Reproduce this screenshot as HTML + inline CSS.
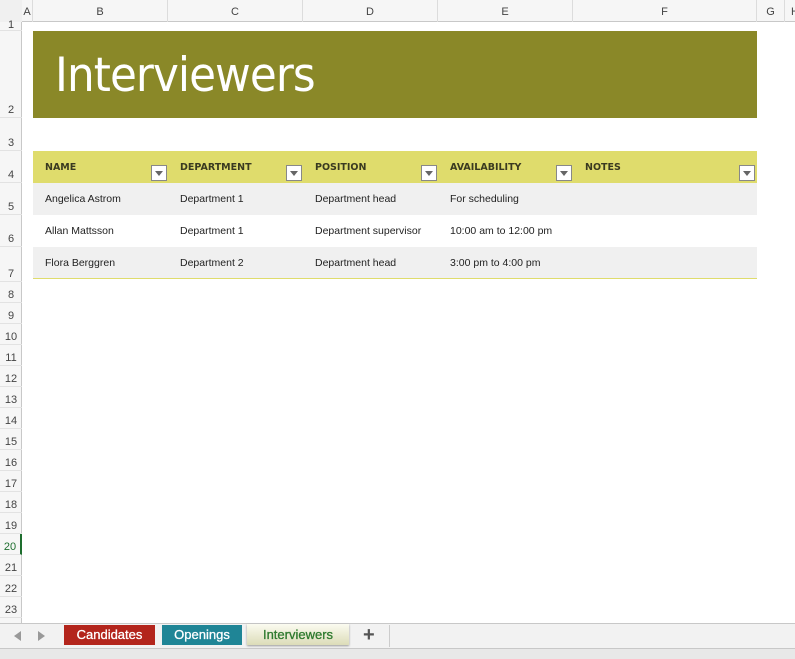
<!DOCTYPE html>
<html><head><style>
*{margin:0;padding:0;box-sizing:border-box}
body{width:795px;height:659px;overflow:hidden;background:#fff;position:relative;font-family:"DejaVu Sans","Liberation Sans",sans-serif;}
.a{position:absolute}
.ch{position:absolute;top:0;height:22px;border-right:1px solid #dcdcdc;font-size:11px;color:#444;text-align:center;line-height:24px;font-family:"Liberation Sans",sans-serif}
.rh{position:absolute;left:0;width:22px;border-bottom:1px solid #e2e2e2;font-size:11px;color:#444;text-align:center;font-family:"Liberation Sans",sans-serif;display:flex;align-items:flex-end;justify-content:center;padding-bottom:1px}
.hd{position:absolute;top:151px;height:32px;font-size:9.5px;font-weight:bold;color:#3a3a20;padding:11px 0 0 12px}
.dd{position:absolute;top:165px;width:16px;height:16px;border:1px solid #888;background:#fff}
.dd:after{content:"";position:absolute;left:3px;top:5px;border-left:4px solid transparent;border-right:4px solid transparent;border-top:5px solid #666}
.c{position:absolute;font-size:10.5px;color:#222;font-family:"Liberation Sans",sans-serif}
.tab{position:absolute;top:625px;height:20px;font-family:"Liberation Sans",sans-serif;font-size:13px;text-align:center;line-height:20px;-webkit-text-stroke:0.3px}
</style></head><body>
<div class="a" style="left:0;top:0;width:795px;height:22px;background:#f6f6f6;border-bottom:1px solid #c8c8c8"></div>
<div class="a" style="left:0;top:0;width:22px;height:22px;background:#f0f0f0"></div>
<div class="ch" style="left:22px;width:11px">A</div>
<div class="ch" style="left:33px;width:135px">B</div>
<div class="ch" style="left:168px;width:135px">C</div>
<div class="ch" style="left:303px;width:135px">D</div>
<div class="ch" style="left:438px;width:135px">E</div>
<div class="ch" style="left:573px;width:184px">F</div>
<div class="ch" style="left:757px;width:28px">G</div>
<div class="ch" style="left:785px;width:20px;border:none">H</div>
<div class="a" style="left:0;top:22px;width:22px;height:601px;background:#f6f6f6;border-right:1px solid #c8c8c8"></div>
<div class="rh" style="top:22px;height:9px;line-height:6px;align-items:flex-start;padding:0">1</div>
<div class="rh" style="top:31px;height:87px">2</div>
<div class="rh" style="top:118px;height:33px">3</div>
<div class="rh" style="top:151px;height:32px">4</div>
<div class="rh" style="top:183px;height:32px">5</div>
<div class="rh" style="top:215px;height:32px">6</div>
<div class="rh" style="top:247px;height:35px">7</div>
<div class="rh" style="top:282px;height:21px">8</div>
<div class="rh" style="top:303px;height:21px">9</div>
<div class="rh" style="top:324px;height:21px">10</div>
<div class="rh" style="top:345px;height:21px">11</div>
<div class="rh" style="top:366px;height:21px">12</div>
<div class="rh" style="top:387px;height:21px">13</div>
<div class="rh" style="top:408px;height:21px">14</div>
<div class="rh" style="top:429px;height:21px">15</div>
<div class="rh" style="top:450px;height:21px">16</div>
<div class="rh" style="top:471px;height:21px">17</div>
<div class="rh" style="top:492px;height:21px">18</div>
<div class="rh" style="top:513px;height:21px">19</div>
<div class="rh" style="top:534px;height:21px;color:#1e6e2e;border-right:2px solid #1e6e2e">20</div>
<div class="rh" style="top:555px;height:21px">21</div>
<div class="rh" style="top:576px;height:21px">22</div>
<div class="rh" style="top:597px;height:21px">23</div>

<div class="a" style="left:33px;top:31px;width:724px;height:87px;background:#8a8828"></div>
<div class="a" style="left:55px;top:46px;font-size:47px;color:#fff;font-family:'DejaVu Sans',sans-serif;letter-spacing:-1px;line-height:60px;transform:scaleX(0.93);transform-origin:left">Interviewers</div>

<div class="a" style="left:33px;top:151px;width:724px;height:32px;background:#dfdc6c"></div>
<div class="a" style="left:33px;top:183px;width:724px;height:32px;background:#f0f0f0"></div>
<div class="a" style="left:33px;top:247px;width:724px;height:32px;background:#f0f0f0;border-bottom:1px solid #dfdc6c"></div>
<div class="hd" style="left:33px">NAME</div>
<div class="hd" style="left:168px">DEPARTMENT</div>
<div class="hd" style="left:303px">POSITION</div>
<div class="hd" style="left:438px">AVAILABILITY</div>
<div class="hd" style="left:573px">NOTES</div>
<div class="dd" style="left:151px"></div>
<div class="dd" style="left:286px"></div>
<div class="dd" style="left:421px"></div>
<div class="dd" style="left:556px"></div>
<div class="dd" style="left:739px"></div>

<div class="c" style="left:45px;top:193px">Angelica Astrom</div>
<div class="c" style="left:180px;top:193px">Department 1</div>
<div class="c" style="left:315px;top:193px">Department head</div>
<div class="c" style="left:450px;top:193px">For scheduling</div>
<div class="c" style="left:45px;top:225px">Allan Mattsson</div>
<div class="c" style="left:180px;top:225px">Department 1</div>
<div class="c" style="left:315px;top:225px">Department supervisor</div>
<div class="c" style="left:450px;top:225px">10:00 am to 12:00 pm</div>
<div class="c" style="left:45px;top:257px">Flora Berggren</div>
<div class="c" style="left:180px;top:257px">Department 2</div>
<div class="c" style="left:315px;top:257px">Department head</div>
<div class="c" style="left:450px;top:257px">3:00 pm to 4:00 pm</div>

<div class="a" style="left:0;top:623px;width:795px;height:26px;background:#f2f2f2;border-top:1px solid #c8c8c8;border-bottom:1px solid #c8c8c8"></div>
<div class="a" style="left:0;top:649px;width:795px;height:10px;background:#e8e8e8"></div>
<div class="a" style="left:14px;top:631px;border-top:5px solid transparent;border-bottom:5px solid transparent;border-right:7px solid #999"></div>
<div class="a" style="left:38px;top:631px;border-top:5px solid transparent;border-bottom:5px solid transparent;border-left:7px solid #999"></div>
<div class="tab" style="left:64px;width:91px;background:#b3251c;color:#fff">Candidates</div>
<div class="tab" style="left:162px;width:80px;background:#1f8596;color:#fff">Openings</div>
<div class="tab" style="left:247px;width:102px;top:624px;height:21px;line-height:22px;background:linear-gradient(#fbfbf0,#dcdcb8);color:#2e7a2e;box-shadow:0 1px 2px #999">Interviewers</div>
<div class="a" style="left:363px;top:624px;font-size:20px;font-weight:bold;color:#555;font-family:'Liberation Sans',sans-serif">+</div>
<div class="a" style="left:389px;top:625px;width:1px;height:22px;background:#ccc"></div>
</body></html>
